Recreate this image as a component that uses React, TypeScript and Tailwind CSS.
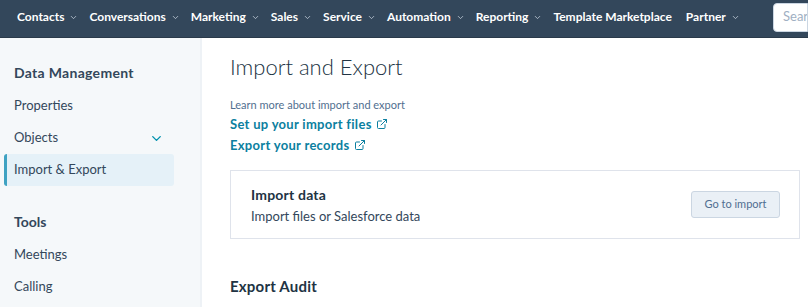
import { ChevronDown, ExternalLink } from 'lucide-react';

const navItems = [
  { label: 'Contacts', menu: true },
  { label: 'Conversations', menu: true },
  { label: 'Marketing', menu: true },
  { label: 'Sales', menu: true },
  { label: 'Service', menu: true },
  { label: 'Automation', menu: true },
  { label: 'Reporting', menu: true },
  { label: 'Template Marketplace', menu: false },
  { label: 'Partner', menu: true },
];

export default function App() {
  return (
    <div
      className="w-[808px] h-[307px] overflow-hidden flex flex-col bg-white"
      style={{ fontFamily: 'Lato, "Noto Sans", sans-serif' }}
    >
      {/* Top nav */}
      <header className="h-[38px] shrink-0 bg-[#33475b] border-b border-[#2a3a4a] flex items-center pl-[17px]">
        <nav className="flex items-center gap-[11px] flex-1 min-w-0 whitespace-nowrap mb-[3px]">
          {navItems.map((item) => (
            <span
              key={item.label}
              className={`flex items-center gap-[5px] text-white text-[12px] font-bold ${
                item.menu ? '' : 'pr-[3px]'
              }`}
            >
              {item.label}
              {item.menu && <ChevronDown className="w-[9px] h-[9px] text-[#cbd6e2]" strokeWidth={2} />}
            </span>
          ))}
        </nav>
        <div className="w-[35px] h-[29px] mb-[3px] shrink-0 bg-white rounded-l-[4px] border border-[#cbd6e2] flex items-center pl-[9px] text-[13px] text-[#a0b0c3] overflow-hidden whitespace-nowrap">
          Sear
        </div>
      </header>

      <div className="flex flex-1 min-h-0">
        {/* Sidebar */}
        <aside className="w-[202px] shrink-0 bg-[#f5f8fa] border-r-2 border-[#eef2f6] pt-[26px] pr-[26px]">
          <h2 className="pl-[14px] text-[14px] font-bold text-[#33475b] h-[18px] leading-[18px] tracking-[0.3px]">
            Data Management
          </h2>
          <ul className="mt-[8px] flex flex-col text-[13px] text-[#33475b]">
            <li className="h-[32px] flex items-center pl-[14px]">Properties</li>
            <li className="h-[32px] flex items-center pl-[14px] justify-between pr-[10px]">
              Objects
              <ChevronDown className="w-[15px] h-[15px] text-[#0091ae]" strokeWidth={2.25} />
            </li>
            <li className="h-[32px] ml-[4px] flex items-center pl-[7px] bg-[#e5f1f8] rounded-[3px] border-l-[3px] border-[#3fa2c2]">
              Import &amp; Export
            </li>
          </ul>
          <h2 className="mt-[27px] pl-[14px] text-[14px] font-bold text-[#33475b] h-[18px] leading-[18px]">
            Tools
          </h2>
          <ul className="mt-[8px] flex flex-col text-[13px] text-[#33475b]">
            <li className="h-[32px] flex items-center pl-[14px]">Meetings</li>
            <li className="h-[32px] flex items-center pl-[14px]">Calling</li>
          </ul>
        </aside>

        {/* Main */}
        <main className="flex-1 pl-[28px] pr-[8px] pt-[15px] text-[#33475b]">
          <h1 className="text-[22px] font-light leading-[28px] text-[#213343]">Import and Export</h1>
          <p className="mt-[17px] text-[11px] leading-[14px] text-[#516f90]">Learn more about import and export</p>
          <a className="mt-[3px] flex items-center gap-[4px] text-[13px] font-bold text-[#0b7fa0] leading-[18px] tracking-[0.3px]">
            Set up your import files
            <ExternalLink className="w-[12px] h-[12px]" strokeWidth={2} />
          </a>
          <a className="mt-[3px] flex items-center gap-[4px] text-[13px] font-bold text-[#0b7fa0] leading-[18px] tracking-[0.3px]">
            Export your records
            <ExternalLink className="w-[12px] h-[12px]" strokeWidth={2} />
          </a>

          <section className="mt-[16px] h-[69px] border border-[#dfe3eb] bg-white flex items-center justify-between pl-[20px] pr-[19px]">
            <div>
              <h3 className="text-[14px] font-bold text-[#213343] leading-[18px] tracking-[0.2px]">Import data</h3>
              <p className="mt-[4px] text-[13px] text-[#33475b] leading-[16px]">Import files or Salesforce data</p>
            </div>
            <button className="w-[89px] h-[27px] bg-[#eaf0f6] border border-[#cbd6e2] rounded-[3px] text-[11px] text-[#506e91]">
              Go to import
            </button>
          </section>

          <h2 className="mt-[36px] text-[15px] font-bold text-[#213343] tracking-[0.2px]">Export Audit</h2>
        </main>
      </div>
    </div>
  );
}
